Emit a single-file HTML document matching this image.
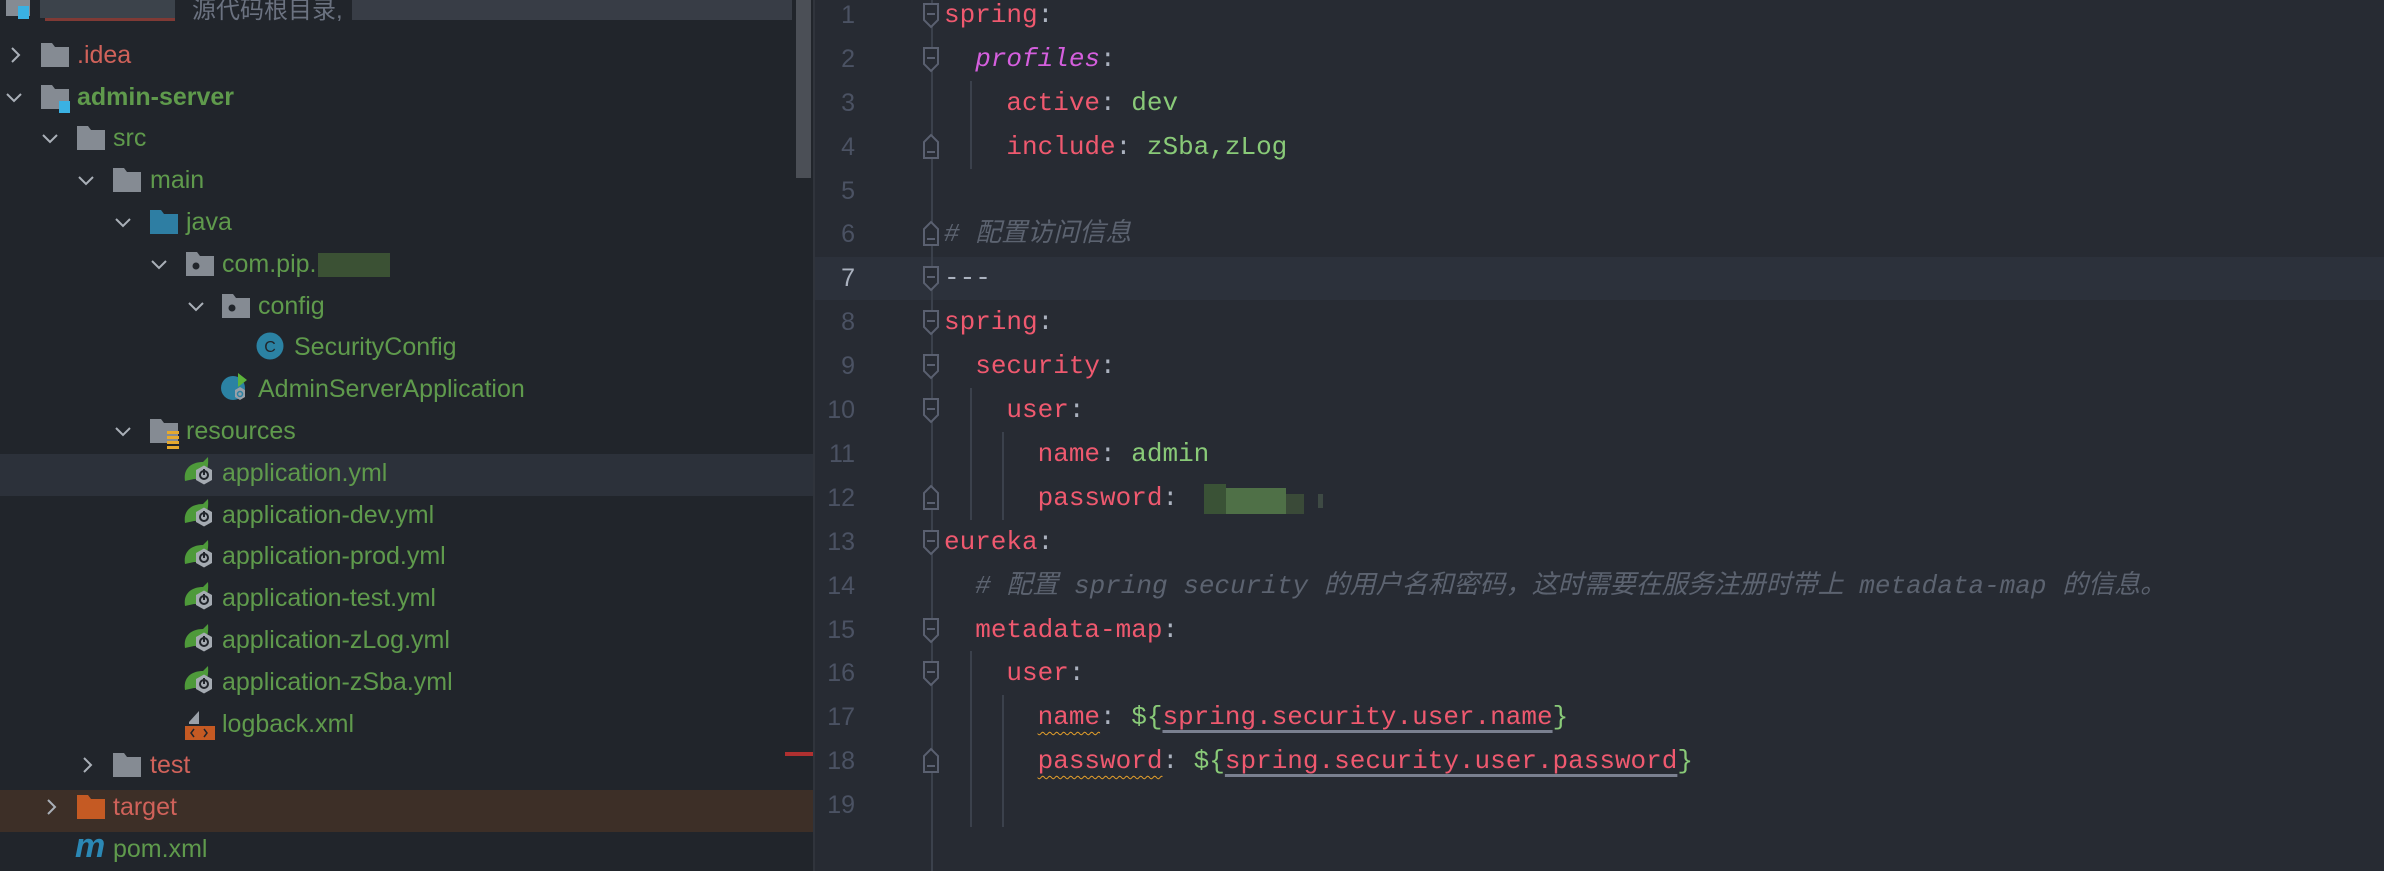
<!DOCTYPE html>
<html><head><meta charset="utf-8"><style>
*{margin:0;padding:0;box-sizing:border-box}
body{width:2384px;height:871px;overflow:hidden;background:#21252b;position:relative;font-family:"Liberation Sans","Noto Sans CJK SC",sans-serif}
#tree{position:absolute;left:0;top:0;width:813px;height:871px;background:#21252b;overflow:hidden}
.r{position:absolute;left:0;width:813px;height:42px;line-height:42px;font-size:25px;color:#5f9a4c;white-space:nowrap}
.r svg,.r span{position:absolute}
.r span{top:0}
.ch{top:11px}
.fd{top:9px}
.red{color:#d0625a!important}
#div{position:absolute;left:813px;top:0;width:2px;height:871px;background:#30343c}
#ed{position:absolute;left:815px;top:0;width:1569px;height:871px;background:#272b33;overflow:hidden}
.l{position:absolute;left:0;width:1569px;height:44px;line-height:44px;white-space:pre;font-family:"Liberation Mono","Noto Sans CJK SC",monospace;font-size:26px;color:#abb2bf}
.n{position:absolute;right:1529px;width:60px;text-align:right;font-family:"Liberation Sans",sans-serif;font-size:25px;color:#4b5263}
.c{position:absolute;left:129px}
.k{color:#ef596f}.v{color:#89ca78}.p{color:#d55fde;font-style:italic}.cm{color:#5c6370;font-style:italic}
.u{text-decoration:underline;text-decoration-color:#7a8090;text-underline-offset:6px;text-decoration-thickness:3px}
.w{text-decoration:underline wavy #e5a02a;text-underline-offset:7px;text-decoration-thickness:1px}
.g{position:absolute;width:2px;background:#3b414c}
</style></head><body>
<div id="tree">
<div class="r" style="top:-8px">
<svg style="left:4px;top:0" width="34" height="40"><path d="M2 0h10l4 4h10v20H2z" fill="#858b93"/><rect x="14" y="14" width="11" height="13" fill="#3ab1e3"/></svg>
<div style="position:absolute;left:40px;top:2px;width:135px;height:24px;background:#48505a;opacity:.7"></div>
<div style="position:absolute;left:45px;top:26px;width:130px;height:3px;background:#c04a3c;opacity:.6"></div>
<span style="left:192px;color:#6b7280;font-size:24px;top:-2px">源代码根目录,</span>
<div style="position:absolute;left:352px;top:4px;width:440px;height:24px;background:#3e444e;opacity:.8"></div>
</div>
<div style="position:absolute;left:796px;top:0;width:15px;height:178px;background:#4b4f56"></div>
<div style="position:absolute;left:785px;top:752px;width:28px;height:4px;background:#b03030"></div>
<div style="position:absolute;left:0;top:454px;width:813px;height:42px;background:#2c313a"></div>
<div style="position:absolute;left:0;top:790px;width:813px;height:42px;background:#3d2f27"></div>

<div class="r" style="top:34px"><svg class="ch" style="left:5px" width="20" height="20"><path d="M7 3l7 7-7 7" stroke="#aab0b8" stroke-width="2" fill="none"/></svg><svg class="fd" style="left:41px" width="28" height="24"><path d="M0 0h11l3 4h14v20H0z" fill="#858b93"/></svg><span class="red" style="left:77px">.idea</span></div>
<div class="r" style="top:76px"><svg class="ch" style="left:4px" width="20" height="20"><path d="M3 7l7 7 7-7" stroke="#aab0b8" stroke-width="2" fill="none"/></svg><svg class="fd" style="left:41px" width="30" height="28"><path d="M0 0h11l3 4h14v20H0z" fill="#858b93"/><rect x="18" y="16" width="11" height="12" fill="#3ab1e3"/></svg><span style="left:77px;font-weight:bold">admin-server</span></div>
<div class="r" style="top:117px"><svg class="ch" style="left:40px" width="20" height="20"><path d="M3 7l7 7 7-7" stroke="#aab0b8" stroke-width="2" fill="none"/></svg><svg class="fd" style="left:77px" width="28" height="24"><path d="M0 0h11l3 4h14v20H0z" fill="#858b93"/></svg><span style="left:113px">src</span></div>
<div class="r" style="top:159px"><svg class="ch" style="left:76px" width="20" height="20"><path d="M3 7l7 7 7-7" stroke="#aab0b8" stroke-width="2" fill="none"/></svg><svg class="fd" style="left:113px" width="28" height="24"><path d="M0 0h11l3 4h14v20H0z" fill="#858b93"/></svg><span style="left:150px">main</span></div>
<div class="r" style="top:201px"><svg class="ch" style="left:113px" width="20" height="20"><path d="M3 7l7 7 7-7" stroke="#aab0b8" stroke-width="2" fill="none"/></svg><svg class="fd" style="left:150px" width="28" height="24"><path d="M0 0h11l3 4h14v20H0z" fill="#2e7ea3"/></svg><span style="left:186px">java</span></div>
<div class="r" style="top:243px"><svg class="ch" style="left:149px" width="20" height="20"><path d="M3 7l7 7 7-7" stroke="#aab0b8" stroke-width="2" fill="none"/></svg><svg class="fd" style="left:186px" width="28" height="24"><path d="M0 0h11l3 4h14v20H0z" fill="#858b93"/><circle cx="10" cy="14" r="3.5" fill="#21252b"/></svg><span style="left:222px">com.pip.</span><div style="position:absolute;left:318px;top:10px;width:72px;height:24px;background:#3b5134"></div></div>
<div class="r" style="top:285px"><svg class="ch" style="left:186px" width="20" height="20"><path d="M3 7l7 7 7-7" stroke="#aab0b8" stroke-width="2" fill="none"/></svg><svg class="fd" style="left:222px" width="28" height="24"><path d="M0 0h11l3 4h14v20H0z" fill="#858b93"/><circle cx="10" cy="14" r="3.5" fill="#21252b"/></svg><span style="left:258px">config</span></div>
<div class="r" style="top:326px"><svg class="fd" style="left:256px;top:6px" width="30" height="30"><circle cx="14" cy="14" r="13.5" fill="#2b82a3"/><text x="14" y="20" font-size="16" text-anchor="middle" fill="#21252b" font-family="Liberation Sans">C</text></svg><span style="left:294px">SecurityConfig</span></div>
<div class="r" style="top:368px"><svg style="left:220px;top:4px" width="36" height="34"><circle cx="13" cy="16" r="12" fill="#2b82a3"/><path d="M18 1l9 7-9 7z" fill="#5db33b"/><path d="M15 18l5-3 5 3v7l-5 3-5-3z" fill="#9aa0a8"/><circle cx="20" cy="22" r="2.5" stroke="#2b82a3" stroke-width="1.5" fill="none"/></svg><span style="left:258px">AdminServerApplication</span></div>
<div class="r" style="top:410px"><svg class="ch" style="left:113px" width="20" height="20"><path d="M3 7l7 7 7-7" stroke="#aab0b8" stroke-width="2" fill="none"/></svg><svg class="fd" style="left:150px" width="32" height="30"><path d="M0 0h11l3 4h14v20H0z" fill="#858b93"/><rect x="17" y="12" width="12" height="3" fill="#e5a92e"/><rect x="17" y="17" width="12" height="3" fill="#e5a92e"/><rect x="17" y="22" width="12" height="3" fill="#e5a92e"/><rect x="17" y="27" width="12" height="3" fill="#e5a92e"/></svg><span style="left:186px">resources</span></div>
<div class="r" style="top:452px"><svg style="left:184px;top:5px" width="34" height="32"><path d="M1 24C-1 11 8 5 19 5l5-5c1 11-2 22-14 22z" fill="#4e9a3a"/><path d="M12 13l8-4.5 8 4.5v10l-8 4.5-8-4.5z" fill="#a5abb2"/><circle cx="20" cy="18" r="4" stroke="#21252b" stroke-width="2" fill="none"/><path d="M20 12v6" stroke="#21252b" stroke-width="2"/></svg><span style="left:222px">application.yml</span></div>
<div class="r" style="top:494px"><svg style="left:184px;top:5px" width="34" height="32"><path d="M1 24C-1 11 8 5 19 5l5-5c1 11-2 22-14 22z" fill="#4e9a3a"/><path d="M12 13l8-4.5 8 4.5v10l-8 4.5-8-4.5z" fill="#a5abb2"/><circle cx="20" cy="18" r="4" stroke="#21252b" stroke-width="2" fill="none"/><path d="M20 12v6" stroke="#21252b" stroke-width="2"/></svg><span style="left:222px">application-dev.yml</span></div>
<div class="r" style="top:535px"><svg style="left:184px;top:5px" width="34" height="32"><path d="M1 24C-1 11 8 5 19 5l5-5c1 11-2 22-14 22z" fill="#4e9a3a"/><path d="M12 13l8-4.5 8 4.5v10l-8 4.5-8-4.5z" fill="#a5abb2"/><circle cx="20" cy="18" r="4" stroke="#21252b" stroke-width="2" fill="none"/><path d="M20 12v6" stroke="#21252b" stroke-width="2"/></svg><span style="left:222px">application-prod.yml</span></div>
<div class="r" style="top:577px"><svg style="left:184px;top:5px" width="34" height="32"><path d="M1 24C-1 11 8 5 19 5l5-5c1 11-2 22-14 22z" fill="#4e9a3a"/><path d="M12 13l8-4.5 8 4.5v10l-8 4.5-8-4.5z" fill="#a5abb2"/><circle cx="20" cy="18" r="4" stroke="#21252b" stroke-width="2" fill="none"/><path d="M20 12v6" stroke="#21252b" stroke-width="2"/></svg><span style="left:222px">application-test.yml</span></div>
<div class="r" style="top:619px"><svg style="left:184px;top:5px" width="34" height="32"><path d="M1 24C-1 11 8 5 19 5l5-5c1 11-2 22-14 22z" fill="#4e9a3a"/><path d="M12 13l8-4.5 8 4.5v10l-8 4.5-8-4.5z" fill="#a5abb2"/><circle cx="20" cy="18" r="4" stroke="#21252b" stroke-width="2" fill="none"/><path d="M20 12v6" stroke="#21252b" stroke-width="2"/></svg><span style="left:222px">application-zLog.yml</span></div>
<div class="r" style="top:661px"><svg style="left:184px;top:5px" width="34" height="32"><path d="M1 24C-1 11 8 5 19 5l5-5c1 11-2 22-14 22z" fill="#4e9a3a"/><path d="M12 13l8-4.5 8 4.5v10l-8 4.5-8-4.5z" fill="#a5abb2"/><circle cx="20" cy="18" r="4" stroke="#21252b" stroke-width="2" fill="none"/><path d="M20 12v6" stroke="#21252b" stroke-width="2"/></svg><span style="left:222px">application-zSba.yml</span></div>
<div class="r" style="top:703px"><svg style="left:185px;top:4px" width="32" height="34"><path d="M4 15L14 4v11z" fill="#9aa0a8"/><rect x="4" y="15" width="10" height="2" fill="#9aa0a8"/><rect x="0" y="19" width="30" height="14" fill="#c55a23"/><path d="M9 22l-3 4 3 4M19 22l3 4-3 4" stroke="#21252b" stroke-width="1.5" fill="none"/></svg><span style="left:222px">logback.xml</span></div>
<div class="r" style="top:744px"><svg class="ch" style="left:77px" width="20" height="20"><path d="M7 3l7 7-7 7" stroke="#aab0b8" stroke-width="2" fill="none"/></svg><svg class="fd" style="left:113px" width="28" height="24"><path d="M0 0h11l3 4h14v20H0z" fill="#858b93"/></svg><span class="red" style="left:150px">test</span></div>
<div class="r" style="top:786px"><svg class="ch" style="left:41px" width="20" height="20"><path d="M7 3l7 7-7 7" stroke="#aab0b8" stroke-width="2" fill="none"/></svg><svg class="fd" style="left:77px" width="28" height="24"><path d="M0 0h11l3 4h14v20H0z" fill="#c55a23"/></svg><span class="red" style="left:113px">target</span></div>
<div class="r" style="top:828px"><span style="left:75px;top:-3px;color:#2b88b5;font-weight:bold;font-style:italic;font-size:34px">m</span><span style="left:113px">pom.xml</span></div>
</div>
<div id="div"></div>
<div id="ed">
<div style="position:absolute;left:0;top:257px;width:1569px;height:43px;background:#2c313b"></div>
<div class="g" style="left:116px;top:0;height:871px"></div>
<div class="g" style="left:155px;top:81px;height:88px"></div>
<div class="g" style="left:155px;top:388px;height:132px"></div>
<div class="g" style="left:187px;top:432px;height:88px"></div>
<div class="g" style="left:155px;top:651px;height:176px"></div>
<div class="g" style="left:187px;top:695px;height:132px"></div>

<div class="l" style="top:-7px"><span class="n">1</span><span class="c"><span class="k">spring</span>:</span></div>
<div class="l" style="top:37px"><span class="n">2</span><span class="c">  <span class="p">profiles</span>:</span></div>
<div class="l" style="top:81px"><span class="n">3</span><span class="c">    <span class="k">active</span>: <span class="v">dev</span></span></div>
<div class="l" style="top:125px"><span class="n">4</span><span class="c">    <span class="k">include</span>: <span class="v">zSba,zLog</span></span></div>
<div class="l" style="top:169px"><span class="n">5</span></div>
<div class="l" style="top:212px"><span class="n">6</span><span class="c cm"># 配置访问信息</span></div>
<div class="l" style="top:256px"><span class="n" style="color:#abb2bf">7</span><span class="c">---</span></div>
<div class="l" style="top:300px"><span class="n">8</span><span class="c"><span class="k">spring</span>:</span></div>
<div class="l" style="top:344px"><span class="n">9</span><span class="c">  <span class="k">security</span>:</span></div>
<div class="l" style="top:388px"><span class="n">10</span><span class="c">    <span class="k">user</span>:</span></div>
<div class="l" style="top:432px"><span class="n">11</span><span class="c">      <span class="k">name</span>: <span class="v">admin</span></span></div>
<div class="l" style="top:476px"><span class="n">12</span><span class="c">      <span class="k">password</span>: </span><div style="position:absolute;left:389px;top:8px;width:22px;height:30px;background:#3a5236"></div><div style="position:absolute;left:411px;top:12px;width:60px;height:26px;background:#4f7047"></div><div style="position:absolute;left:471px;top:18px;width:18px;height:20px;background:#3a4a38"></div><div style="position:absolute;left:503px;top:18px;width:5px;height:14px;background:#3e4a44"></div></div>
<div class="l" style="top:520px"><span class="n">13</span><span class="c"><span class="k">eureka</span>:</span></div>
<div class="l" style="top:564px"><span class="n">14</span><span class="c cm">  # 配置 spring security 的用户名和密码，这时需要在服务注册时带上 metadata-map 的信息。</span></div>
<div class="l" style="top:608px"><span class="n">15</span><span class="c">  <span class="k">metadata-map</span>:</span></div>
<div class="l" style="top:651px"><span class="n">16</span><span class="c">    <span class="k">user</span>:</span></div>
<div class="l" style="top:695px"><span class="n">17</span><span class="c">      <span class="k w">name</span>: <span class="v">${</span><span class="k u">spring.security.user.name</span><span class="v">}</span></span></div>
<div class="l" style="top:739px"><span class="n">18</span><span class="c">      <span class="k w">password</span>: <span class="v">${</span><span class="k u">spring.security.user.password</span><span class="v">}</span></span></div>
<div class="l" style="top:783px"><span class="n">19</span></div>

<svg style="position:absolute;left:0;top:0" width="200" height="871">
<g fill="#272b33" stroke="#5a6070" stroke-width="2">
<path d="M109 4h14v16l-7 7-7-7z"/><path d="M109 48h14v16l-7 7-7-7z"/>
<path d="M109 158h14v-16l-7-7-7 7z"/>
<path d="M109 245h14v-16l-7-7-7 7z"/>
<path d="M109 267h14v16l-7 7-7-7z"/>
<path d="M109 311h14v16l-7 7-7-7z"/><path d="M109 355h14v16l-7 7-7-7z"/><path d="M109 399h14v16l-7 7-7-7z"/>
<path d="M109 509h14v-16l-7-7-7 7z"/>
<path d="M109 531h14v16l-7 7-7-7z"/>
<path d="M109 619h14v16l-7 7-7-7z"/><path d="M109 662h14v16l-7 7-7-7z"/>
<path d="M109 772h14v-16l-7-7-7 7z"/>
</g>
<g stroke="#5a6070" stroke-width="2">
<path d="M112 14h8M112 58h8M112 152h8M112 239h8M112 277h8M112 321h8M112 365h8M112 409h8M112 503h8M112 541h8M112 629h8M112 672h8M112 766h8"/>
</g>
</svg>
</div>
</body></html>
